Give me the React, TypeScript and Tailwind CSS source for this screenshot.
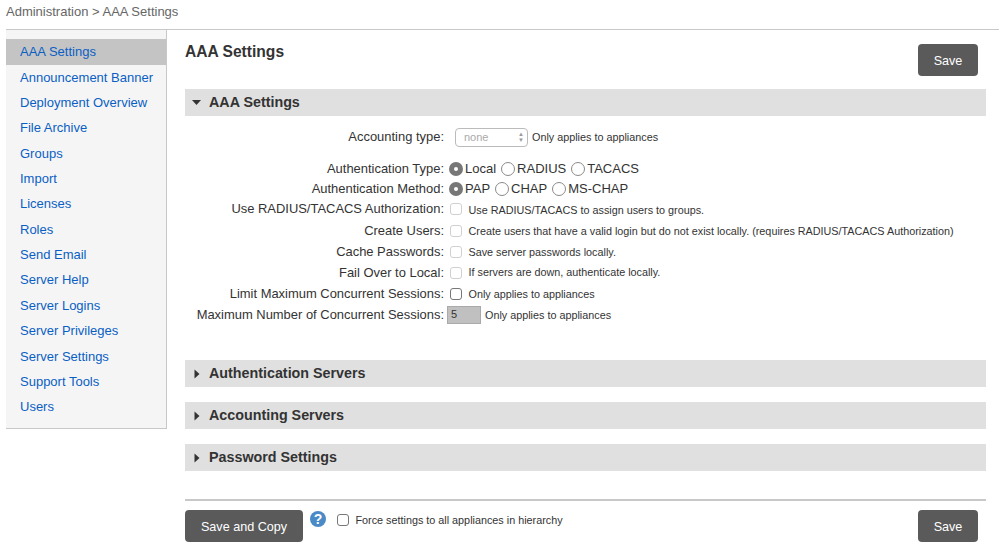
import React from "react";

const nav = ["AAA Settings","Announcement Banner","Deployment Overview","File Archive","Groups","Import","Licenses","Roles","Send Email","Server Help","Server Logins","Server Privileges","Server Settings","Support Tools","Users"];
const tall = [0, 3, 6, 9, 11];

function Radio({ on }: { on?: boolean }) {
  return on ? (
    <span className="w-[14px] h-[14px] rounded-full bg-[#777] flex items-center justify-center shrink-0">
      <span className="w-[4px] h-[4px] rounded-full bg-white" />
    </span>
  ) : (
    <span className="w-[14px] h-[14px] rounded-full border border-[#8a8a8a] bg-white shrink-0" />
  );
}

function Box({ dim }: { dim?: boolean }) {
  return <span className={`w-[12px] h-[12px] rounded-[3px] border bg-white shrink-0 ${dim ? "border-[#d0d0d0]" : "border-[#777]"}`} />;
}

function Row({ label, children, h, mt, mb }: { label: string; children: React.ReactNode; h: string; mt?: string; mb?: string }) {
  return (
    <div className={`flex items-center ${h} ${mt ?? ""} ${mb ?? ""}`}>
      <div className="w-[259px] text-right text-[12.95px] text-[#333] shrink-0 whitespace-nowrap">{label}:</div>
      <div className="flex items-center ml-[6px]">{children}</div>
    </div>
  );
}

function Section({ title, open, mt }: { title: string; open?: boolean; mt?: string }) {
  return (
    <div className={`h-[27px] bg-[#e0e0e0] flex items-center ${mt ?? ""}`}>
      <span className="w-[24px] flex justify-center">
        {open ? (
          <svg className="mr-[2px]" width="9" height="6" viewBox="0 0 9 6"><path d="M0 0h9L4.5 5z" fill="#333" /></svg>
        ) : (
          <svg width="6" height="10" viewBox="0 0 6 10"><path d="M0.5 0.5v9L5.5 5z" fill="#333" /></svg>
        )}
      </span>
      <span className="text-[14.3px] font-bold text-[#333]">{title}</span>
    </div>
  );
}

const SaveBtn = ({ label = "Save", w = "w-[60px]" }: { label?: string; w?: string }) => (
  <button className={`${w} h-[32px] bg-[#5a5a5a] text-white text-[12.6px] rounded-[4px] pt-[2px]`}>{label}</button>
);

const Small = ({ children, ml = "ml-[6.5px]", pt = "pt-[2px]" }: { children: React.ReactNode; ml?: string; pt?: string }) => (
  <span className={`text-[10.8px] text-[#333] ${ml} ${pt} whitespace-nowrap`}>{children}</span>
);

export default function App() {
  return (
    <div className="w-[999px] h-[560px] bg-white overflow-hidden font-['Liberation_Sans',Arial,sans-serif] text-[#333]">
      <div className="h-[30px] border-b border-[#c8c8c8] ml-[6px] pt-[3px] text-[13px] text-[#666] leading-[18px]">Administration &gt; AAA Settings</div>
      <div className="flex">
        <nav className="w-[161px] h-[399px] ml-[6px] pt-[9px] bg-[#f5f5f5] border-b border-r border-[#c8c8c8] shrink-0">
          {nav.map((n, i) => (
            <div key={n} className={`pl-[14px] text-[13px] leading-[25px] text-[#0a5fc4] ${tall.includes(i) ? "h-[26px]" : "h-[25px]"} ${i === 0 ? "bg-[#c4c4c4]" : ""}`}>{n}</div>
          ))}
        </nav>
        <main className="w-[801px] ml-[18px] mr-[13px] pt-[9px]">
          <div className="flex justify-between h-[50px] pr-[8px] pt-[5px]">
            <h1 className="text-[15.6px] font-bold text-[#333] leading-[17px] -mt-[1px]">AAA Settings</h1>
            <SaveBtn />
          </div>
          <Section title="AAA Settings" open />
          <div className="h-[244px] pt-[9px]">
            <Row label="Accounting type" h="h-[24px]">
              <span className="w-[73px] h-[19px] ml-[5px] border border-[#bbb] rounded-[4px] bg-white text-[11px] text-[#aaa] pl-[8px] flex items-center justify-between pr-[3px]">none<span className="text-[6px] leading-[6px] text-[#999]">▲<br />▼</span></span>
              <Small ml="ml-[4px]" pt="pt-0">Only applies to appliances</Small>
            </Row>
            <Row label="Authentication Type" h="h-[20px]" mt="mt-[10px]">
              <span className="flex items-center gap-[2px] ml-[-1px] text-[13px]"><Radio on /><span className="mr-[3px]">Local</span><Radio /><span className="mr-[3px]">RADIUS</span><Radio /><span>TACACS</span></span>
            </Row>
            <Row label="Authentication Method" h="h-[20px]">
              <span className="flex items-center gap-[2px] ml-[-1px] text-[13px]"><Radio on /><span className="mr-[3px]">PAP</span><Radio /><span className="mr-[3px]">CHAP</span><Radio /><span>MS-CHAP</span></span>
            </Row>
            <Row label="Use RADIUS/TACACS Authorization" h="h-[20px]" mb="mb-[1px]"><Box dim /><Small>Use RADIUS/TACACS to assign users to groups.</Small></Row>
            <Row label="Create Users" h="h-[21px]"><Box dim /><Small>Create users that have a valid login but do not exist locally. (requires RADIUS/TACACS Authorization)</Small></Row>
            <Row label="Cache Passwords" h="h-[21px]"><Box dim /><Small>Save server passwords locally.</Small></Row>
            <Row label="Fail Over to Local" h="h-[21px]"><Box dim /><Small pt="pt-0">If servers are down, authenticate locally.</Small></Row>
            <Row label="Limit Maximum Concurrent Sessions" h="h-[21px]"><Box /><Small>Only applies to appliances</Small></Row>
            <Row label="Maximum Number of Concurrent Sessions" h="h-[21px]">
              <span className="w-[34px] h-[18px] bg-[#c0c0c0] border border-[#aaa] text-[11px] pl-[3px] flex items-center -ml-[3px]">5</span>
              <Small ml="ml-[4px]">Only applies to appliances</Small>
            </Row>
          </div>
          <Section title="Authentication Servers" />
          <Section title="Accounting Servers" mt="mt-[15px]" />
          <Section title="Password Settings" mt="mt-[15px]" />
          <div className="mt-[28px] border-t-2 border-[#c8c8c8] pt-[9px] flex items-start pr-[8px]">
            <SaveBtn label="Save and Copy" w="w-[118px]" />
            <span className="ml-[7px] mt-[1px] w-[16px] h-[16px] rounded-full bg-[#4a8ac6] text-white text-[14px] font-bold flex items-center justify-center">?</span>
            <span className="flex items-center ml-[11px] mt-[2px]"><Box /><Small pt="pt-0">Force settings to all appliances in hierarchy</Small></span>
            <span className="ml-auto"><SaveBtn /></span>
          </div>
        </main>
      </div>
    </div>
  );
}
